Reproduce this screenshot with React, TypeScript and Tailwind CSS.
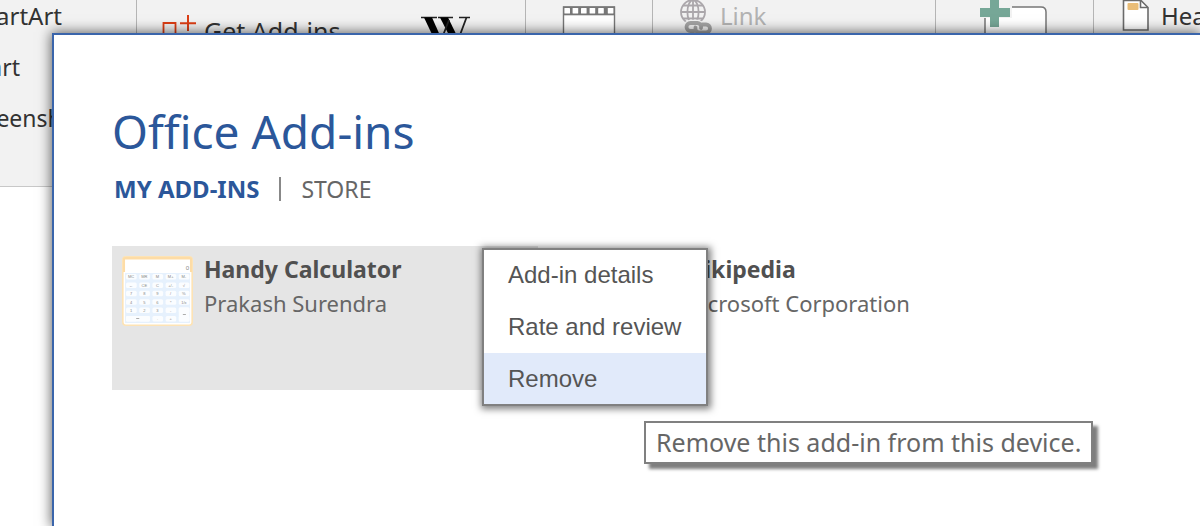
import React from "react";

function GetAddinsIcon() {
  return (
    <svg width="36" height="34" viewBox="0 0 36 34" fill="none" stroke="#dc3e15" aria-hidden="true">
      <path d="M1.5 9H13.5V21H1.5ZM1.5 21H13.5V33H1.5ZM13.5 21H25.5V33H13.5Z" strokeWidth="1.8" />
      <path d="M26 1V17M18 9.300H34" strokeWidth="2" />
    </svg>
  );
}

function WikipediaIcon() {
  return (
    <svg width="50" height="34" viewBox="0 0 50 34" aria-hidden="true">
      <path d="M0 1.500H16M17 1.500H32M38 1.500H49" fill="none" stroke="#222" strokeWidth="1.600" />
      <path d="M3 1.500H11L21 24L17.500 32Z" fill="#000" />
      <path d="M19 1.500H27L38 24L34.500 32Z" fill="#000" />
      <path d="M28 4L17.500 31M45.500 1.500L34.500 31" fill="none" stroke="#222" strokeWidth="1.800" />
    </svg>
  );
}

function VideoIcon() {
  return (
    <svg width="54" height="44" viewBox="0 0 54 44" aria-hidden="true">
      <rect x="1.500" y="1" width="51" height="42" fill="#fff" stroke="#777" strokeWidth="1.400" />
      <rect x="1" y="0.500" width="52" height="8.800" fill="#777" />
      {[2.4, 10.6, 19, 27.6, 36.2, 45.8].map((x) => (
        <rect key={x} x={x} y="2" width="5.600" height="5.600" rx="0.600" fill="#fff" />
      ))}
    </svg>
  );
}

function LinkIcon() {
  return (
    <svg width="34" height="38" viewBox="0 0 34 38" fill="none" aria-hidden="true">
      <g stroke="#aba7ab" strokeWidth="1.800">
        <circle cx="14" cy="12" r="12" />
        <ellipse cx="14" cy="12" rx="5.600" ry="12" />
        <path d="M14 0V24M2 12H26M4 5.500H24M4 18.500H24" />
      </g>
      <g strokeLinecap="round">
        <path d="M15 31h-3.500a4 4 0 0 1 0-8h7a4 4 0 0 1 3.500 5M23 24.500h4a4 4 0 0 1 0 8h-7a4 4 0 0 1-3.500-5" stroke="#f2f2f2" strokeWidth="6.500" />
        <path d="M15 31h-3.500a4 4 0 0 1 0-8h7a4 4 0 0 1 3.500 5M23 24.500h4a4 4 0 0 1 0 8h-7a4 4 0 0 1-3.500-5" stroke="#a3a3a3" strokeWidth="3.800" />
      </g>
    </svg>
  );
}

function CommentIcon() {
  return (
    <svg width="68" height="52" viewBox="0 0 68 52" aria-hidden="true">
      <path d="M5 12H61Q66 12 66 17V50H5Z" fill="#fff" stroke="#777" strokeWidth="1.500" />
      <path d="M4 11H32V23H4Z" fill="#f2f2f2" />
      <path d="M10 0H19V13H30V22H19V32H10V22H0V13H10Z" fill="#76a797" />
    </svg>
  );
}

function HeaderIcon() {
  return (
    <svg width="28" height="32" viewBox="0 0 28 32" aria-hidden="true">
      <path d="M1.500 0.500H19L26 7.500V30H1.500Z" fill="#fff" stroke="#6b6b6b" strokeWidth="1.600" />
      <path d="M18.500 0.500V7.500H26" fill="none" stroke="#6b6b6b" strokeWidth="1.600" />
      <rect x="5.500" y="3" width="11" height="7" rx="1" fill="#e9bd78" />
    </svg>
  );
}

function CalculatorIcon() {
  const rows = [0, 1, 2, 3, 4, 5];
  const cols = [0, 1, 2, 3, 4];
  const labels = [
    ["MC", "MR", "M", "M+", "M-"],
    ["←", "CE", "C", "+/-", "√"],
    ["7", "8", "9", "/", "%"],
    ["4", "5", "6", "*", "1/x"],
    ["1", "2", "3", "-", ""],
    ["", "", ".", "+", ""],
  ];
  return (
    <svg className="shrink-0" width="71" height="70" viewBox="0 0 70 70" preserveAspectRatio="none" aria-hidden="true">
      <rect x="0.800" y="0.800" width="68.400" height="68.400" rx="3" fill="#fff" stroke="#fde3b5" strokeWidth="1.600" />
      <path d="M1 16V3Q1 1 3 1H67Q69 1 69 3V16Z" fill="#fddca6" />
      <rect x="3" y="3.500" width="64" height="13" fill="#fff" />
      <text x="64.500" y="14" fontSize="6" fill="#888" fontFamily="Liberation Sans, sans-serif" textAnchor="middle">0</text>
      <rect x="3" y="17" width="64" height="50" fill="#e6f1fd" />
      {rows.map((r) =>
        cols.map((c) => (
          <g key={`${r}-${c}`}>
            <rect x={4 + c * 13} y={18 + r * 8.4} width="10.500" height="5.500" rx="1.500" fill="#fbfdff" />
            <text x={9 + c * 13} y={22.4 + r * 8.4} fontSize="4" fill="#888" fontFamily="Liberation Sans, sans-serif" textAnchor="middle">
              {labels[r][c]}
            </text>
          </g>
        ))
      )}
      <rect x="4" y="60" width="23.500" height="5.500" rx="1" fill="#fbfdff" />
      <rect x="56" y="51.600" width="10.500" height="13.900" rx="1" fill="#fbfdff" />
      <path d="M14 62.500h3M60 58.500h3" stroke="#999" strokeWidth="0.800" />
    </svg>
  );
}

const group = "shrink-0 border-r border-[#b5b5b5]";

function Ribbon() {
  return (
    <div className="flex h-[187px] overflow-hidden border-b border-[#c8c8c8] bg-[#f2f2f2] text-2xl text-[#333]">
      <div className={`${group} flex w-[137px] flex-col items-start`}>
        <button className="flex h-8 w-[62px] items-center justify-end">SmartArt</button>
        <button className="mt-[19px] flex h-8 w-[20px] items-center justify-end text-[23px]">Chart</button>
        <button className="mt-[19px] flex h-8 w-[84px] items-center justify-end text-[23px]">Screenshot</button>
      </div>
      <div className={`${group} flex w-[389px] items-start justify-between pl-[25px] pr-[54px]`}>
        <button className="flex items-start gap-[6px] pt-[14px]">
          <GetAddinsIcon />
          <span className="text-[25px] leading-[34px]">Get Add-ins</span>
        </button>
        <button aria-label="Wikipedia" className="pt-4">
          <WikipediaIcon />
        </button>
      </div>
      <div className={`${group} flex w-[127px] items-start justify-center pt-[6px]`}>
        <button aria-label="Online Video"><VideoIcon /></button>
      </div>
      <div className={`${group} flex w-[283px] items-start pl-[26px]`}>
        <button className="flex items-start gap-[7px] text-[#b3b3b3]">
          <LinkIcon />
          <span className="leading-8">Link</span>
        </button>
      </div>
      <div className={`${group} flex w-[158px] items-start pl-[44px]`}>
        <button aria-label="Comment" className="-mt-[5px]"><CommentIcon /></button>
      </div>
      <div className="flex min-w-0 flex-1 items-start overflow-hidden pl-[28px]">
        <button className="flex items-start gap-[11px]">
          <HeaderIcon />
          <span className="leading-8">Header</span>
        </button>
      </div>
    </div>
  );
}

function AddinCard({ name, publisher, icon, active, children }: {
  name: string;
  publisher: string;
  icon: React.ReactNode;
  active?: boolean;
  children?: React.ReactNode;
}) {
  return (
    <article className={`relative flex h-36 w-[426px] shrink-0 items-start gap-[11px] p-[10px] ${active ? "bg-[#e5e5e5]" : ""}`}>
      {icon}
      <div className="text-[#666]">
        <h2 className="-mt-1 text-[23px] leading-[34px] font-bold text-[#505050]">{name}</h2>
        <p className="text-[22px] leading-[35px]">{publisher}</p>
      </div>
      {children}
    </article>
  );
}

function AddinMenu() {
  const item = "block w-full px-6 text-left whitespace-nowrap hover:bg-[#e1eafa]";
  return (
    <div role="menu" className="absolute top-[2px] left-[370px] z-10 w-[226px] border-2 border-[#808080] bg-white font-['Liberation_Sans',sans-serif] text-2xl text-[#555] shadow-[1px_1px_7px_2px_rgba(0,0,0,0.5)]">
      <button role="menuitem" className={`${item} h-[50px]`}>Add-in details</button>
      <button role="menuitem" className={`${item} h-[53px]`}>Rate and review</button>
      <button role="menuitem" className={`${item} h-[51px] bg-[#e1eafa]`}>Remove</button>
      <div role="tooltip" className="absolute top-[171px] left-[160px] border-2 border-[#808080] bg-white px-[10px] font-['Noto_Sans',sans-serif] text-[25px] leading-[39px] whitespace-nowrap text-[#666] shadow-[5px_5px_3px_rgba(0,0,0,0.5)]">
        Remove this add-in from this device.
      </div>
    </div>
  );
}

export default function App() {
  return (
    <div className="relative min-h-screen overflow-hidden bg-white font-['Noto_Sans',sans-serif]">
      <Ribbon />
      <main className="absolute top-[33px] right-0 bottom-0 left-[52px] overflow-hidden border-t-2 border-l-2 border-[#3a65ab] bg-white pl-[58px] shadow-[0_0_12px_1px_rgba(0,0,0,0.6)]">
        <h1 className="pt-[66px] text-[46px] leading-[60px] text-[#2b579a]">Office Add-ins</h1>
        <nav className="mt-[11px] flex items-center gap-5 pl-[2px] leading-[34px]">
          <a href="#my-add-ins" className="text-2xl leading-[34px] font-bold text-[#2b579a]">MY ADD-INS</a>
          <span className="h-6 w-[2px] bg-[#888]" />
          <a href="#store" className="text-[23px] leading-[34px] text-[#666]">STORE</a>
        </nav>
        <section className="mt-10 flex gap-[52px]">
          <AddinCard name="Handy Calculator" publisher="Prakash Surendra" icon={<CalculatorIcon />} active>
            <AddinMenu />
          </AddinCard>
          <AddinCard
            name="Wikipedia"
            publisher="Microsoft Corporation"
            icon={<span className="h-[70px] w-[71px] shrink-0" />}
          />
        </section>
      </main>
    </div>
  );
}
